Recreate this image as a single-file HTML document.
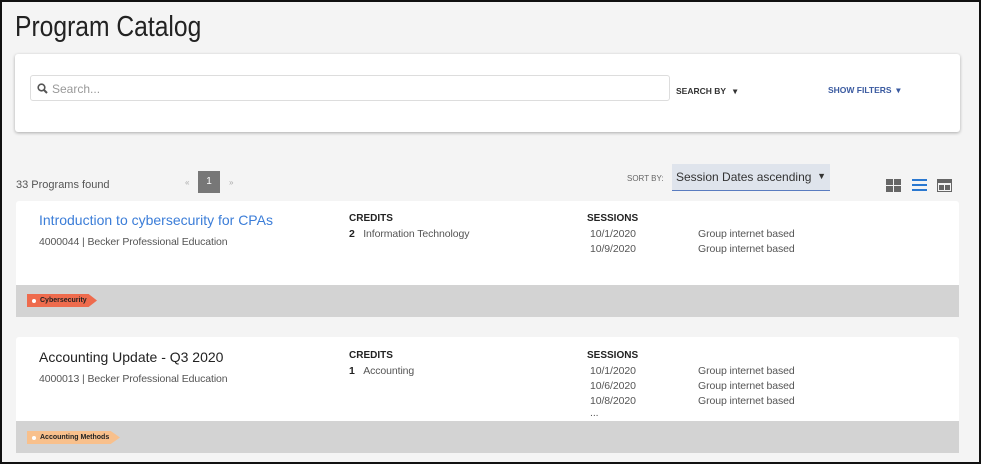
<!DOCTYPE html>
<html><head><meta charset="utf-8"><style>
*{box-sizing:border-box;margin:0;padding:0}
body{width:981px;height:466px;background:#fff;font-family:"Liberation Sans",sans-serif;position:relative;overflow:hidden}
#frame{position:absolute;left:0;top:0;width:981px;height:464px;border:2px solid #111;background:#f4f4f4}
.a{position:absolute}
h1{position:absolute;left:15px;top:11px;font-size:29px;font-weight:normal;color:#222;transform:scaleX(0.85);transform-origin:left}
.panel{left:15px;top:54px;width:945px;height:78px;background:#fff;border-radius:3px;box-shadow:0 1px 3px rgba(0,0,0,.3)}
.search{left:30px;top:75px;width:640px;height:26px;border:1px solid #ddd;border-radius:3px;background:#fff;font-size:12px;color:#999;padding:6px 0 0 21px}
.card{left:16px;width:943px;background:#fff;border-radius:3px}
.foot{left:16px;width:943px;background:#d3d3d3}
.tag{position:absolute;height:13px;font-size:7px;font-weight:bold;color:#222;padding:3px 0 0 13px}
.tag:before{content:"";position:absolute;left:5px;top:5px;width:4px;height:4px;border-radius:50%;background:#fff}
.lbl{font-size:10px;font-weight:bold;color:#222}
.t{font-size:10.5px;color:#555;letter-spacing:-0.1px}
</style></head><body>
<div id="frame"></div>
<h1>Program Catalog</h1>
<div class="a panel"></div>
<div class="a search">Search...</div>
<svg class="a" style="left:37px;top:83px" width="11" height="11" viewBox="0 0 11 11"><circle cx="4.5" cy="4.5" r="3.3" fill="none" stroke="#555" stroke-width="1.6"/><path d="M7 7l3 3" stroke="#555" stroke-width="2"/></svg>
<div class="a" style="left:676px;top:86px;font-size:8.5px;font-weight:bold;color:#333">SEARCH BY &nbsp;&nbsp;▾</div>
<div class="a" style="left:828px;top:85px;font-size:8.5px;font-weight:bold;color:#3a5aa0">SHOW FILTERS &nbsp;▾</div>
<div class="a" style="left:16px;top:179px;font-size:11px;color:#555">33 Programs found</div>
<div class="a" style="left:185px;top:178px;font-size:8px;color:#aaa">«</div>
<div class="a" style="left:198px;top:171px;width:22px;height:22px;background:#777;color:#fff;font-size:10px;text-align:center;line-height:22px">1</div>
<div class="a" style="left:229px;top:178px;font-size:8px;color:#aaa">»</div>
<div class="a" style="left:627px;top:174px;font-size:8px;color:#666">SORT BY:</div>
<div class="a" style="left:672px;top:164px;width:158px;height:27px;background:#dfe4ec;border-bottom:1px solid #5a7cc0;font-size:12px;color:#333;padding:6px 0 0 4px">Session Dates ascending<span style="position:absolute;right:4px;top:7px;font-size:9px">▼</span></div>
<svg class="a" style="left:886px;top:179px" width="16" height="13"><rect x="0" y="0" width="7" height="6" fill="#666"/><rect x="8" y="0" width="7" height="6" fill="#666"/><rect x="0" y="7" width="7" height="6" fill="#666"/><rect x="8" y="7" width="7" height="6" fill="#666"/></svg>
<svg class="a" style="left:912px;top:179px" width="15" height="13"><rect x="0" y="0" width="15" height="2" fill="#2a78d0"/><rect x="0" y="5" width="15" height="2" fill="#2a78d0"/><rect x="0" y="10" width="15" height="2" fill="#2a78d0"/></svg>
<svg class="a" style="left:937px;top:179px" width="15" height="13"><rect x="0.5" y="0.5" width="14" height="12" fill="none" stroke="#666"/><rect x="0" y="0" width="15" height="4" fill="#666"/><rect x="2" y="6" width="5" height="5" fill="#666"/><rect x="8" y="6" width="5" height="5" fill="#666"/></svg>

<div class="a card" style="top:201px;height:116px"></div>
<div class="a foot" style="top:285px;height:32px"></div>
<div class="a" style="left:39px;top:212px;font-size:14px;color:#3b7dd8">Introduction to cybersecurity for CPAs</div>
<div class="a t" style="left:39px;top:236px">4000044 | Becker Professional Education</div>
<div class="a lbl" style="left:349px;top:213px">CREDITS</div>
<div class="a t" style="left:349px;top:228px"><b style="color:#222">2</b> &nbsp;&nbsp;Information Technology</div>
<div class="a lbl" style="left:587px;top:213px">SESSIONS</div>
<div class="a t" style="left:590px;top:228px">10/1/2020</div><div class="a t" style="left:698px;top:228px">Group internet based</div>
<div class="a t" style="left:590px;top:243px">10/9/2020</div><div class="a t" style="left:698px;top:243px">Group internet based</div>
<div class="tag" style="left:27px;top:294px;width:70px;background:#ee6b4d;clip-path:polygon(0 0,88% 0,100% 50%,88% 100%,0 100%)">Cybersecurity</div>

<div class="a card" style="top:337px;height:116px"></div>
<div class="a foot" style="top:421px;height:32px"></div>
<div class="a" style="left:39px;top:349px;font-size:14px;color:#222">Accounting Update - Q3 2020</div>
<div class="a t" style="left:39px;top:373px">4000013 | Becker Professional Education</div>
<div class="a lbl" style="left:349px;top:350px">CREDITS</div>
<div class="a t" style="left:349px;top:365px"><b style="color:#222">1</b> &nbsp;&nbsp;Accounting</div>
<div class="a lbl" style="left:587px;top:350px">SESSIONS</div>
<div class="a t" style="left:590px;top:365px">10/1/2020</div><div class="a t" style="left:698px;top:365px">Group internet based</div>
<div class="a t" style="left:590px;top:380px">10/6/2020</div><div class="a t" style="left:698px;top:380px">Group internet based</div>
<div class="a t" style="left:590px;top:395px">10/8/2020</div><div class="a t" style="left:698px;top:395px">Group internet based</div>
<div class="a t" style="left:590px;top:407px">...</div>
<div class="tag" style="left:27px;top:431px;width:93px;background:#f8c08c;clip-path:polygon(0 0,90% 0,100% 50%,90% 100%,0 100%)">Accounting Methods</div>
</body></html>
